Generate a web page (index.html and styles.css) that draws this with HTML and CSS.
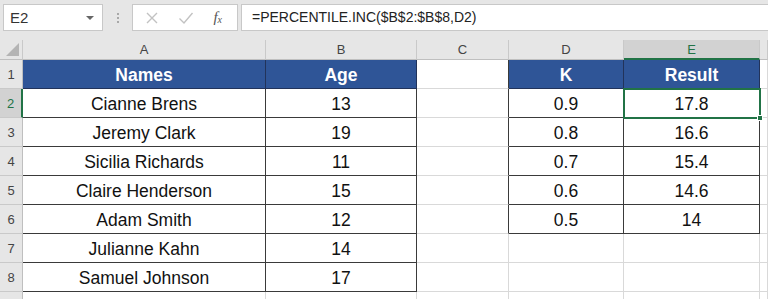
FILE: index.html
```html
<!DOCTYPE html>
<html>
<head>
<meta charset="utf-8">
<link rel="stylesheet" href="styles.css">
</head>
<body>
<div class="toolbar">
  <div class="namebox"><span class="nb-text">E2</span><span class="nb-arrow"></span></div>
  <div class="dots"><i></i><i></i><i></i></div>
  <div class="fxbox">
    <svg class="ico" width="14" height="14" viewBox="0 0 14 14"><path d="M2 2 L12 12 M12 2 L2 12" stroke="#c2c2c2" stroke-width="1.4" fill="none"/></svg>
    <svg class="ico" width="16" height="14" viewBox="0 0 16 14"><path d="M1.5 7.5 L6 12 L14.5 2" stroke="#c2c2c2" stroke-width="1.4" fill="none"/></svg>
    <span class="fx">f<sub>x</sub></span>
  </div>
  <div class="formula">=PERCENTILE.INC($B$2:$B$8,D2)</div>
</div>
<div class="sheet">
  <div class="ch corner"><span class="tri"></span></div>
  <div class="ch">A</div><div class="ch">B</div><div class="ch">C</div><div class="ch">D</div><div class="ch sel-col">E</div><div class="ch"></div>

  <div class="rh">1</div>
  <div class="c hd">Names</div><div class="c hd">Age</div><div class="c tl"></div><div class="c hd">K</div><div class="c hd">Result</div><div class="c"></div>

  <div class="rh sel-row">2</div>
  <div class="c t">Cianne Brens</div><div class="c t">13</div><div class="c tl"></div><div class="c t">0.9</div><div class="c t active">17.8<span class="handle"></span></div><div class="c"></div>

  <div class="rh">3</div>
  <div class="c t">Jeremy Clark</div><div class="c t">19</div><div class="c tl"></div><div class="c t">0.8</div><div class="c t">16.6</div><div class="c"></div>

  <div class="rh">4</div>
  <div class="c t">Sicilia Richards</div><div class="c t">11</div><div class="c tl"></div><div class="c t">0.7</div><div class="c t">15.4</div><div class="c"></div>

  <div class="rh">5</div>
  <div class="c t">Claire Henderson</div><div class="c t">15</div><div class="c tl"></div><div class="c t">0.6</div><div class="c t">14.6</div><div class="c"></div>

  <div class="rh">6</div>
  <div class="c t">Adam Smith</div><div class="c t">12</div><div class="c tl"></div><div class="c t">0.5</div><div class="c t">14</div><div class="c"></div>

  <div class="rh">7</div>
  <div class="c t">Julianne Kahn</div><div class="c t">14</div><div class="c"></div><div class="c"></div><div class="c"></div><div class="c"></div>

  <div class="rh">8</div>
  <div class="c t">Samuel Johnson</div><div class="c t">17</div><div class="c"></div><div class="c"></div><div class="c"></div><div class="c"></div>

  <div class="rh last"></div>
  <div class="c last"></div><div class="c last"></div><div class="c last"></div><div class="c last"></div><div class="c last"></div><div class="c last"></div>
</div>
</body>
</html>
```

FILE: styles.css
```css
* { box-sizing: border-box; }
html, body { margin: 0; padding: 0; }
body {
  width: 768px;
  height: 299px;
  overflow: hidden;
  background: #ffffff;
  font-family: "Liberation Sans", Arial, sans-serif;
}
.toolbar {
  height: 40px;
  background: #e6e6e6;
  display: flex;
  align-items: flex-start;
  padding: 4px 0 0 3px;
}
.namebox {
  width: 100px;
  height: 27px;
  background: #fff;
  border: 1px solid #c8c8c8;
  display: flex;
  align-items: center;
  justify-content: space-between;
  padding: 0 8px 0 6px;
}
.nb-text { font-size: 15px; color: #333; }
.nb-arrow {
  width: 0; height: 0;
  border-left: 4px solid transparent;
  border-right: 4px solid transparent;
  border-top: 4px solid #666;
}
.dots {
  width: 29px;
  height: 27px;
  display: flex;
  flex-direction: column;
  align-items: center;
  justify-content: center;
  gap: 2px;
}
.dots i { display: block; width: 2px; height: 2px; background: #a8a8a8; }
.fxbox {
  width: 106px;
  height: 27px;
  background: #fff;
  border: 1px solid #c8c8c8;
  display: flex;
  align-items: center;
  justify-content: space-between;
  padding: 0 15px 0 12px;
}
.fx {
  font-family: "Liberation Serif", "Times New Roman", serif;
  font-style: italic;
  font-size: 15px;
  color: #555;
  line-height: 1;
}
.fx sub { font-size: 10px; vertical-align: -1px; }
.formula {
  margin-left: 3px;
  flex: 1;
  height: 27px;
  background: #fff;
  border: 1px solid #c8c8c8;
  border-right: none;
  font-size: 14px;
  color: #222;
  line-height: 25px;
  padding-left: 10px;
}
.sheet {
  display: grid;
  grid-template-columns: 23px 243px 151px 92px 115px 136px 8px;
  grid-template-rows: 20px repeat(8, 29px) 7px;
}
.ch {
  background: #e6e6e6;
  border-right: 1px solid #c9c9c9;
  border-bottom: 1px solid #bfbfbf;
  font-size: 13px;
  color: #444;
  text-align: center;
  line-height: 20px;
}
.corner { position: relative; }
.tri {
  position: absolute;
  right: 3px;
  bottom: 3px;
  width: 0; height: 0;
  border-left: 13px solid transparent;
  border-bottom: 13px solid #b4b4b4;
}
.sel-col {
  background: #d2d2d2;
  color: #217346;
  border-bottom: 2px solid #217346;
}
.rh {
  background: #e6e6e6;
  border-right: 1px solid #bfbfbf;
  border-bottom: 1px solid #c9c9c9;
  font-size: 13px;
  color: #444;
  text-align: center;
  line-height: 29px;
}
.sel-row {
  background: #d2d2d2;
  color: #217346;
  border-right: 2px solid #217346;
}
.c {
  border-right: 1px solid #d9d9d9;
  border-bottom: 1px solid #d9d9d9;
  font-size: 17.5px;
  color: #111;
  text-align: center;
  line-height: 28px;
  padding-top: 1px;
  white-space: nowrap;
}
.last { border-bottom: none; }
.c.t {
  border-right: 1px solid #3a3a3a;
  border-bottom: 1px solid #3a3a3a;
}
.c.tl { border-right: 1px solid #3a3a3a; }
.c.hd {
  background: #2f5597;
  color: #fff;
  font-weight: bold;
  border-right: 1px solid #22335a;
  border-bottom: 1px solid #22335a;
}
.active {
  position: relative;
  outline: 2px solid #217346;
  outline-offset: -1px;
}
.handle {
  position: absolute;
  right: -4px;
  bottom: -4px;
  width: 6px;
  height: 6px;
  background: #217346;
  border: 1px solid #fff;
}
```
